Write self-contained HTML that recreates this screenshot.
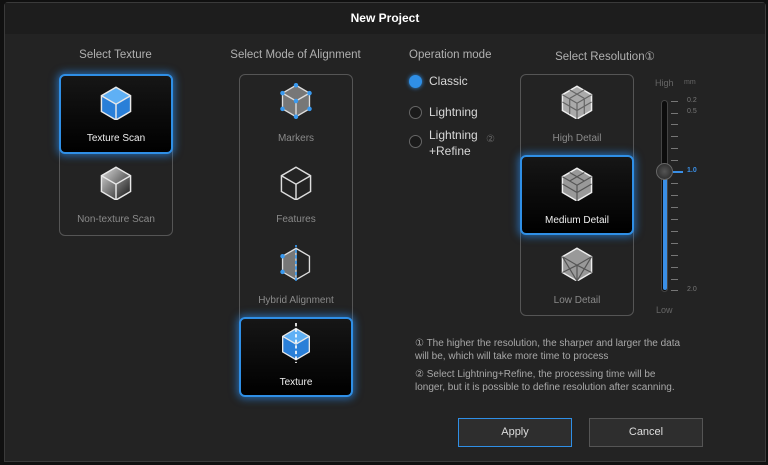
<!DOCTYPE html>
<html><head><style>
*{margin:0;padding:0;box-sizing:border-box}
body{width:768px;height:465px;background:#101010;font-family:"Liberation Sans",sans-serif;position:relative;overflow:hidden}
.dlg{position:absolute;left:4px;top:2px;width:762px;height:460px;background:#232323;border:1px solid #3a3a3a;border-radius:4px 4px 0 0}
.tb{position:absolute;left:0;top:0;right:0;height:31px;background:#1d1d1d;color:#fff;font-weight:bold;font-size:12px;text-align:center;line-height:30px}
.a{position:absolute}
.h{position:absolute;color:#b0b0b0;font-size:11.5px;text-align:center}
.box{position:absolute;border:1px solid #555;border-radius:6px}
.card{position:absolute;text-align:center;font-size:10px;color:#8a8a8a}
.sel{background:linear-gradient(#161616,#000);border:2px solid #2f8fe6;border-radius:6px;box-shadow:0 0 8px 2px rgba(40,140,240,.6);color:#f0f0f0}
.card svg{position:absolute;left:50%;margin-left:-17px}
.card span{position:absolute;left:0;right:0}
.rad{position:absolute;width:13px;height:13px;border-radius:50%;border:1.5px solid #666;background:#1a1a1a}
.rl{position:absolute;color:#d8d8d8;font-size:12px}
.note{position:absolute;left:415px;color:#a8a8a8;font-size:10px;line-height:13px;width:268px}
.btn{position:absolute;height:29px;width:114px;background:#2e2e2e;color:#ddd;font-size:11px;text-align:center;line-height:27px;border:1px solid #555}
.tick{position:absolute;left:671px;width:7px;height:1px;background:#777}
.tl{position:absolute;left:687px;color:#777;font-size:7px}
</style></head><body>
<div class="dlg"><div class="tb">New Project</div></div>

<div class="h" style="left:59px;top:49px;width:113px">Select Texture</div>
<div class="h" style="left:210px;top:49px;width:171px">Select Mode of Alignment</div>
<div class="h" style="left:409px;top:49px;width:95px;text-align:left">Operation mode</div>
<div class="h" style="left:540px;top:49px;width:130px">Select Resolution①</div>

<!-- texture -->
<div class="box" style="left:59px;top:74px;width:114px;height:162px"></div>
<div class="card sel" style="left:59px;top:74px;width:114px;height:80px">
<svg width="34" height="34" viewBox="2 2 28 28" style="top:10px"><path d="M16 3L28 10V23L16 30L4 23V10Z" fill="#2a7fd8"/><path d="M16 3L28 10L16 17L4 10Z" fill="#5fb0f5"/><path d="M16 3L28 10V23L16 30L4 23V10ZM4 10L16 17L28 10M16 17V30" fill="none" stroke="#e8e8e8" stroke-width="1.2"/></svg>
<span style="top:57px">Texture Scan</span></div>
<div class="card" style="left:59px;top:155px;width:114px;height:80px">
<svg width="34" height="34" viewBox="2 2 28 28" style="top:11px"><defs><linearGradient id="g1" x1="0" y1="0" x2="1" y2="1"><stop offset="0" stop-color="#ddd"/><stop offset="1" stop-color="#111"/></linearGradient></defs><path d="M16 3L28 10V23L16 30L4 23V10Z" fill="url(#g1)" stroke="#e8e8e8" stroke-width="1.2"/><path d="M4 10L16 17L28 10M16 17V30" fill="none" stroke="#e8e8e8" stroke-width="1.2"/></svg>
<span style="top:59px">Non-texture Scan</span></div>

<!-- alignment -->
<div class="box" style="left:239px;top:74px;width:114px;height:322px"></div>
<div class="card" style="left:239px;top:74px;width:114px;height:80px">
<svg width="34" height="36" viewBox="1 2 30 32" style="top:9px"><path d="M16 4L28 11V25L16 32L4 25V11Z" fill="#777" stroke="#ddd" stroke-width="1.2"/><path d="M4 11L16 18L28 11M16 18V32" fill="none" stroke="#ddd" stroke-width="1.2"/><g fill="#3a9af0"><circle cx="16" cy="4" r="2"/><circle cx="28" cy="11" r="2"/><circle cx="4" cy="11" r="2"/><circle cx="28" cy="25" r="2"/><circle cx="4" cy="25" r="2"/><circle cx="16" cy="32" r="2"/><circle cx="16" cy="18" r="2"/></g></svg>
<span style="top:59px">Markers</span></div>
<div class="card" style="left:239px;top:155px;width:114px;height:80px">
<svg width="34" height="34" viewBox="2 2 28 28" style="top:11px"><path d="M16 3L28 10V23L16 30L4 23V10ZM4 10L16 17L28 10M16 17V30" fill="none" stroke="#ddd" stroke-width="1.2"/></svg>
<span style="top:59px">Features</span></div>
<div class="card" style="left:239px;top:236px;width:114px;height:80px">
<svg width="34" height="37" viewBox="1 2 30 33" style="top:9px"><path d="M16 5L4 12V26L16 33Z" fill="#777"/><path d="M16 5L28 12V26L16 33L4 26V12ZM16 5V33" fill="none" stroke="#ddd" stroke-width="1.2"/><path d="M16 1V35" stroke="#3a9af0" stroke-width="1.5" stroke-dasharray="3 2"/><circle cx="4" cy="12" r="2" fill="#3a9af0"/><circle cx="4" cy="26" r="2" fill="#3a9af0"/></svg>
<span style="top:59px">Hybrid Alignment</span></div>
<div class="card sel" style="left:239px;top:317px;width:114px;height:80px">
<svg width="34" height="40" viewBox="1 1 30 36" style="top:4px"><path d="M16 6L28 13V27L16 34L4 27V13Z" fill="#2a7fd8"/><path d="M16 6L28 13L16 20L4 13Z" fill="#5fb0f5"/><path d="M16 6L28 13V27L16 34L4 27V13ZM4 13L16 20L28 13" fill="none" stroke="#e8e8e8" stroke-width="1.2"/><path d="M16 1V37" stroke="#fff" stroke-width="1.5" stroke-dasharray="3 2"/></svg>
<span style="top:58px">Texture</span></div>

<!-- operation mode -->
<div class="rad" style="left:409px;top:75px;border-color:#2f8fe6;background:#2f8fe6;box-shadow:0 0 4px #2f8fe6"></div>
<div class="rl" style="left:429px;top:74px">Classic</div>
<div class="rad" style="left:409px;top:106px"></div>
<div class="rl" style="left:429px;top:105px">Lightning</div>
<div class="rad" style="left:409px;top:135px"></div>
<div class="rl" style="left:429px;top:127px;line-height:16px">Lightning<br>+Refine</div>
<div class="a" style="left:486px;top:134px;color:#666;font-size:10px">②</div>

<!-- resolution -->
<div class="box" style="left:520px;top:74px;width:114px;height:242px"></div>
<div class="card" style="left:520px;top:74px;width:114px;height:80px">
<svg width="34" height="34" viewBox="2 2 28 28" style="top:11px"><path d="M16 3L28 10V23L16 30L4 23V10Z" fill="#aaa" stroke="#eee" stroke-width="1.2"/><path d="M4 10L16 17L28 10M16 17V30M10 6L22 13M22 6L10 13M10 13V26M22 13V26M4 16L16 23L28 16" fill="none" stroke="#666" stroke-width="1"/></svg>
<span style="top:59px">High Detail</span></div>
<div class="card sel" style="left:520px;top:155px;width:114px;height:80px">
<svg width="34" height="34" viewBox="2 2 28 28" style="top:10px"><path d="M16 3L28 10V23L16 30L4 23V10Z" fill="#999" stroke="#eee" stroke-width="1.2"/><path d="M4 10L16 17L28 10M16 17V30M10 6.5L22 13.5M22 6.5L10 13.5M4 16L16 23L28 16" fill="none" stroke="#555" stroke-width="1"/></svg>
<span style="top:58px">Medium Detail</span></div>
<div class="card" style="left:520px;top:236px;width:114px;height:80px">
<svg width="34" height="34" viewBox="2 2 28 28" style="top:11px"><path d="M16 3L28 10V23L16 30L4 23V10Z" fill="#999" stroke="#eee" stroke-width="1.2"/><path d="M4 10L16 17L28 10M16 17V30M4 10L16 30M4 23L16 17M28 10L16 30M28 23L16 17" fill="none" stroke="#555" stroke-width="1"/></svg>
<span style="top:59px">Low Detail</span></div>

<!-- slider -->
<div class="a" style="left:655px;top:78px;color:#666;font-size:9px">High</div>
<div class="a" style="left:684px;top:79px;color:#666;font-size:7px">mm</div>
<div class="a" style="left:661px;top:100px;width:7px;height:192px;border-radius:4px;background:#0c0c0c;border:1px solid #444"></div>
<div class="a" style="left:663px;top:172px;width:4px;height:118px;border-radius:2px;background:#3a8fe6"></div>
<div class="a" style="left:656px;top:163px;width:17px;height:17px;border-radius:50%;background:radial-gradient(#555,#222);border:1px solid #666"></div>
<div class="a" style="left:673px;top:171px;width:10px;height:2px;background:#3a8fe6"></div>
<div class="tick" style="top:101px"></div><div class="tick" style="top:113px"></div><div class="tick" style="top:124px"></div><div class="tick" style="top:136px"></div><div class="tick" style="top:148px"></div><div class="tick" style="top:160px"></div><div class="tick" style="top:183px"></div><div class="tick" style="top:195px"></div><div class="tick" style="top:207px"></div><div class="tick" style="top:219px"></div><div class="tick" style="top:231px"></div><div class="tick" style="top:243px"></div><div class="tick" style="top:255px"></div><div class="tick" style="top:267px"></div><div class="tick" style="top:279px"></div><div class="tick" style="top:290px"></div>
<div class="tl" style="top:97px">0.2</div><div class="tl" style="top:108px">0.5</div>
<div class="tl" style="top:167px;color:#3a8fe6;font-weight:bold">1.0</div><div class="tl" style="top:286px">2.0</div>
<div class="a" style="left:656px;top:305px;color:#666;font-size:9px">Low</div>

<div class="note" style="top:337px">① The higher the resolution, the sharper and larger the data will be, which will take more time to process</div>
<div class="note" style="top:368px">② Select Lightning+Refine, the processing time will be longer, but it is possible to define resolution after scanning.</div>

<div class="btn" style="left:458px;top:418px;border-color:#2f8fe6">Apply</div>
<div class="btn" style="left:589px;top:418px">Cancel</div>
</body></html>
